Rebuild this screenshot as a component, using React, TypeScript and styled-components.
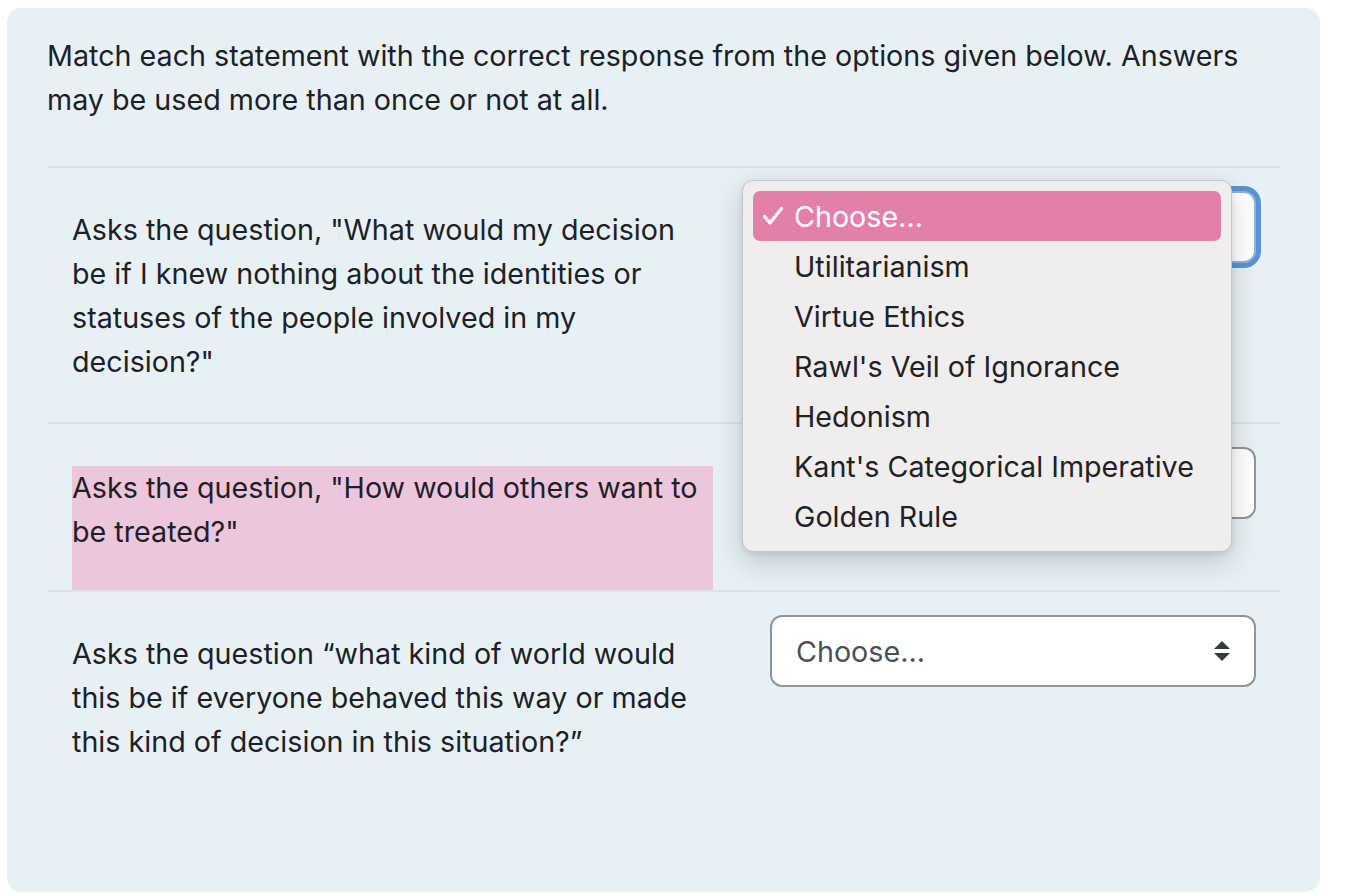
import { createGlobalStyle, styled } from "styled-components"

const GlobalStyle = createGlobalStyle`
  * { box-sizing: border-box; }
  html, body { margin: 0; padding: 0; background: #ffffff; }
  body {
    font-family: Inter, "Liberation Sans", Arial, sans-serif;
    color: #1d2125;
  }
`

const options = [
  "Choose...",
  "Utilitarianism",
  "Virtue Ethics",
  "Rawl's Veil of Ignorance",
  "Hedonism",
  "Kant's Categorical Imperative",
  "Golden Rule",
]

const questions = [
  {
    text: 'Asks the question, "What would my decision be if I knew nothing about the identities or statuses of the people involved in my decision?"',
    open: true,
  },
  {
    text: 'Asks the question, "How would others want to be treated?"',
    highlighted: true,
  },
  {
    text: "Asks the question \u201cwhat kind of world would this be if everyone behaved this way or made this kind of decision in this situation?\u201d",
  },
]

const S = {
  Page: styled.div`
    padding: 8px 29px 2px 7px;
  `,
  Panel: styled.section`
    background: #e7f1f5;
    border-radius: 14px;
    padding: 26px 40px 0 40px;
    height: 884px;
  `,
  Intro: styled.p`
    margin: 0 0 44px 0;
    font-size: 28.7px;
    line-height: 44px;
    color: #1d2125;
  `,
  Rows: styled.div`
    display: flex;
    flex-direction: column;
  `,
  Row: styled.div`
    display: grid;
    grid-template-columns: 641px 486px;
    column-gap: 57px;
    padding: 0 25px;
    border-top: 2px solid #dee2e6;
  `,
  Statement: styled.div<{ $highlighted?: boolean }>`
    margin-top: ${({ $highlighted }) => ($highlighted ? "42px" : "40px")};
    padding: 0 6px ${({ $highlighted }) => ($highlighted ? "36px" : "38px")} 0;
    font-size: 28.7px;
    line-height: 44px;
    color: #1d2125;
    background: ${({ $highlighted }) => ($highlighted ? "#ecc6dc" : "transparent")};
  `,
  SelectCell: styled.div`
    position: relative;
    padding-top: 23px;
  `,
  Select: styled.div<{ $focused?: boolean }>`
    height: 72px;
    display: flex;
    align-items: center;
    justify-content: space-between;
    padding: 0 24px 0 24px;
    background: #ffffff;
    border: 2px solid ${({ $focused }) => ($focused ? "#8fb3dd" : "#8f959e")};
    border-radius: 12px;
    box-shadow: ${({ $focused }) => ($focused ? "0 0 0 5px #5b93d0" : "none")};
    font-size: 28.7px;
    color: #495057;
  `,
  Arrows: styled.svg`
    width: 16px;
    height: 20px;
    flex: none;
  `,
  Menu: styled.ul`
    position: absolute;
    top: 12px;
    left: -28px;
    width: 490px;
    margin: 0;
    padding: 10px;
    list-style: none;
    background: #efedee;
    border: 1px solid #c8c6c8;
    border-radius: 11px;
    box-shadow: 0 10px 28px rgba(0, 0, 0, 0.18), 0 2px 6px rgba(0, 0, 0, 0.08);
    z-index: 2;
  `,
  Option: styled.li<{ $selected?: boolean }>`
    height: 50px;
    display: flex;
    align-items: center;
    padding-left: 9px;
    border-radius: 7px;
    font-size: 28.7px;
    color: ${({ $selected }) => ($selected ? "#ffffff" : "#222222")};
    background: ${({ $selected }) => ($selected ? "#e280ab" : "transparent")};
  `,
  Check: styled.span`
    width: 32px;
    flex: none;
    display: flex;
    align-items: center;
  `,
}

const SelectArrows = () => (
  <S.Arrows viewBox="0 0 4 5">
    <path d="M2 0L0 2h4zm0 5L0 3h4z" fill="#343a40" />
  </S.Arrows>
)

const CheckMark = () => (
  <svg width="22" height="20" viewBox="0 0 22 20">
    <path
      d="M2.5 10.5l5.5 6.5L19.5 2.5"
      fill="none"
      stroke="#ffffff"
      strokeWidth="3"
      strokeLinecap="round"
      strokeLinejoin="round"
    />
  </svg>
)

export default function App() {
  return (
    <>
      <GlobalStyle />
      <S.Page>
        <S.Panel>
          <S.Intro>
            Match each statement with the correct response from the options
            given below. Answers may be used more than once or not at all.
          </S.Intro>
          <S.Rows>
            {questions.map((q, i) => (
              <S.Row key={i}>
                <S.Statement $highlighted={q.highlighted}>{q.text}</S.Statement>
                <S.SelectCell>
                  <S.Select $focused={q.open}>
                    <span>Choose...</span>
                    <SelectArrows />
                  </S.Select>
                  {q.open && (
                    <S.Menu>
                      {options.map((o, j) => (
                        <S.Option key={o} $selected={j === 0}>
                          <S.Check>{j === 0 && <CheckMark />}</S.Check>
                          {o}
                        </S.Option>
                      ))}
                    </S.Menu>
                  )}
                </S.SelectCell>
              </S.Row>
            ))}
          </S.Rows>
        </S.Panel>
      </S.Page>
    </>
  )
}
